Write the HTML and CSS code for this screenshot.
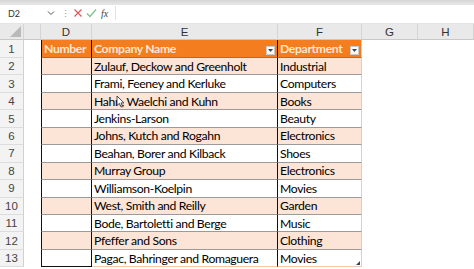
FILE: index.html
```html
<!DOCTYPE html>
<html lang="en">
<head>
    <meta charset="UTF-8">
    <title>Sheet</title>
    <link rel="stylesheet" href="styles.css">
</head>
<body>

    <!-- Barra de fórmulas -->
    <div class="topband"></div>
    <div class="formula-bar">
        <div class="name-box">
            <span>D2</span>
            <svg class="chev" width="8" height="6" viewBox="0 0 8 6"><path d="M1 1.5 L4 4.5 L7 1.5" fill="none" stroke="#555" stroke-width="1"/></svg>
        </div>
        <div class="dots">&#8942;</div>
        <svg class="fb-icon" width="10" height="10" viewBox="0 0 10 10"><path d="M1.5 1.5 L8.5 8.5 M8.5 1.5 L1.5 8.5" stroke="#e0585a" stroke-width="1.2"/></svg>
        <svg class="fb-icon" width="11" height="10" viewBox="0 0 11 10"><path d="M1 5.5 L4 8.5 L10 1.5" fill="none" stroke="#7cc18a" stroke-width="1.2"/></svg>
        <span class="fx">fx</span>
        <div class="formula-input"></div>
    </div>

    <!-- Hoja -->
    <div class="sheet" id="sheet"></div>

    <svg class="cursor" width="9" height="13" viewBox="0 0 9 13"><path d="M1 1 L1 10.5 L3.4 8.4 L5 12 L6.5 11.3 L5 7.9 L8 7.9 Z" fill="#fff" stroke="#222" stroke-width="0.8"/></svg>

    <script>
        const rows = [
            ["Zulauf, Deckow and Greenholt", "Industrial"],
            ["Frami, Feeney and Kerluke", "Computers"],
            ["Hahn, Waelchi and Kuhn", "Books"],
            ["Jenkins-Larson", "Beauty"],
            ["Johns, Kutch and Rogahn", "Electronics"],
            ["Beahan, Borer and Kilback", "Shoes"],
            ["Murray Group", "Electronics"],
            ["Williamson-Koelpin", "Movies"],
            ["West, Smith and Reilly", "Garden"],
            ["Bode, Bartoletti and Berge", "Music"],
            ["Pfeffer and Sons", "Clothing"],
            ["Pagac, Bahringer and Romaguera", "Movies"]
        ];

        const sheet = document.getElementById("sheet");
        const filterBtn = '<span class="filter"><svg width="5" height="3" viewBox="0 0 5 3"><path d="M0 0 L5 0 L2.5 3 Z" fill="#444"/></svg></span>';

        function cell(cls, html) {
            const c = document.createElement("div");
            c.className = "cell " + cls;
            c.innerHTML = html || "";
            sheet.appendChild(c);
        }

        // encabezados de columna
        cell("corner", '<span class="tri"></span>');
        cell("colhead", "");
        ["D", "E", "F", "G", "H"].forEach(l => cell("colhead", l));

        // fila 1
        cell("rowhead", "1");
        cell("blank", "");
        cell("th col-d", "Number");
        cell("th col-e", "Company Name" + filterBtn);
        cell("th col-f", "Department" + filterBtn);
        cell("blank", "");
        cell("blank", "");

        rows.forEach((r, i) => {
            const band = i % 2 === 0 ? " band" : "";
            const last = i === rows.length - 1 ? " last" : "";
            cell("rowhead", String(i + 2));
            cell("blank", "");
            cell("td col-d" + band + last, "");
            cell("td col-e" + band + last, r[0]);
            cell("td col-f" + band + last, r[1] + (last ? '<span class="resize"></span>' : ""));
            cell("blank", "");
            cell("blank", "");
        });
    </script>
</body>
</html>
```

FILE: styles.css
```css
body {
    margin: 0;
    width: 474px;
    height: 269px;
    overflow: hidden;
    background-color: #fff;
    font-family: Lato, "Liberation Sans", sans-serif;
    position: relative;
}

.topband {
    height: 5px;
    background: linear-gradient(#d6d6d6, #e8e8e8);
}

.formula-bar {
    height: 14px;
    display: flex;
    align-items: center;
    background-color: #fff;
    padding-top: 1px;
}

.name-box {
    box-sizing: border-box;
    width: 57px;
    height: 12px;
    padding: 0 2px 0 8px;
    display: flex;
    align-items: center;
    justify-content: space-between;
    font-size: 9px;
    color: #333;
}

.dots {
    width: 16px;
    text-align: center;
    font-size: 9px;
    color: #999;
}

.fb-icon {
    margin-right: 3px;
}

.fx {
    font-family: "Liberation Serif", serif;
    font-style: italic;
    font-size: 10px;
    color: #444;
    margin-left: 1px;
    width: 12px;
}

.formula-input {
    flex: 1;
    height: 14px;
    margin-left: 2px;
    border-left: 1px solid #e2e2e2;
}

.sheet {
    margin-top: 3px;
    border-top: 1px solid #e4e4e4;
    display: grid;
    grid-template-columns: 24px 17px 51px 186px 84px 56px 56px;
    grid-template-rows: 16px 18px repeat(12, 17.45px);
}

.cell {
    box-sizing: border-box;
    font-size: 12.2px;
    letter-spacing: -0.35px;
    color: #000;
    display: flex;
    align-items: center;
    white-space: nowrap;
    overflow: hidden;
    position: relative;
}

.corner {
    background-color: #e9e9e9;
    border-right: 1px solid #d4d4d4;
    border-bottom: 1px solid #c8c8c8;
}

.tri {
    position: absolute;
    right: 2px;
    bottom: 2px;
    width: 0;
    height: 0;
    border-left: 11px solid transparent;
    border-bottom: 11px solid #b9b9b9;
}

.colhead {
    background-color: #e9e9e9;
    border-right: 1px solid #d4d4d4;
    border-bottom: 1px solid #c8c8c8;
    justify-content: center;
    font-family: "Liberation Sans", sans-serif;
    font-size: 11.5px;
    letter-spacing: 0;
    color: #333;
}

.rowhead {
    background-color: #f3f3f3;
    border-bottom: 1px solid #dddddd;
    border-right: 1px solid #d0d0d0;
    justify-content: center;
    font-family: "Liberation Sans", sans-serif;
    font-size: 11.5px;
    letter-spacing: 0;
    color: #444;
}

.blank {
    background-color: #fff;
}

.th {
    background-color: #f47d20;
    color: #fde6d3;
    font-weight: bold;
    padding-left: 2px;
    border-bottom: 1px solid #b06a38;
}

.td {
    background-color: #fff;
    padding-left: 2px;
    border-bottom: 1px solid #9a9a9a;
}

.band {
    background-color: #fce4d6;
}

.col-d {
    border-left: 1.5px solid #111;
    border-right: 1.5px solid #111;
}

.col-e {
    border-right: 1.5px solid #111;
}

.col-f {
    border-right: 1px solid #f2c9ad;
}

.td.col-d.last {
    border-bottom: 1.5px solid #111;
}

.td.last {
    border-bottom-color: #f2c9ad;
}

.filter {
    position: absolute;
    right: 2px;
    bottom: 2px;
    width: 9px;
    height: 9px;
    background-color: #fafafa;
    border: 1px solid #c9c9c9;
    box-sizing: border-box;
    display: flex;
    align-items: center;
    justify-content: center;
}

.resize {
    position: absolute;
    right: 1px;
    bottom: 1px;
    width: 0;
    height: 0;
    border-left: 4px solid transparent;
    border-bottom: 4px solid #444;
}

.cursor {
    position: absolute;
    left: 116px;
    top: 95px;
}
```
